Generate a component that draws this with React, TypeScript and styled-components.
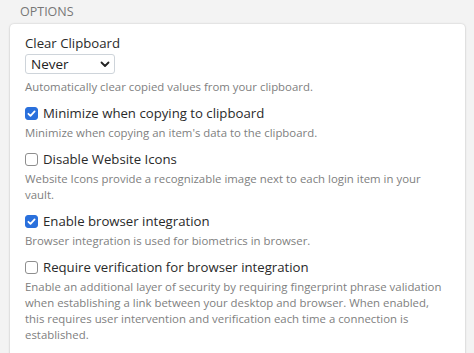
import React, { useState } from "react";
import styled, { createGlobalStyle } from "styled-components";

const GlobalStyle = createGlobalStyle`
  html, body {
    margin: 0;
    padding: 0;
    background: #f3f3f3;
    font-family: "Open Sans", "Liberation Sans", sans-serif;
    -webkit-font-smoothing: antialiased;
  }
`;

const Page = styled.div`
  padding: 0 10px 0 10px;
  width: 455px;
`;

const SectionTitle = styled.h2`
  margin: 0;
  padding: 3px 10px 0;
  height: 21px;
  font-size: 12.5px;
  font-weight: 400;
  line-height: 18px;
  color: #777;
  text-transform: uppercase;
`;

const Card = styled.div`
  background: #fff;
  border-radius: 4px;
  box-shadow: 0 0 2px rgba(0, 0, 0, 0.22), 0 1px 2px rgba(0, 0, 0, 0.08);
  padding: 9px 15px 12px;
`;

const FormGroup = styled.div`
  margin-bottom: 8px;
`;

const Label = styled.label`
  display: flex;
  align-items: center;
  font-size: 13.2px;
  line-height: 20px;
  color: #2a2a2a;
`;

const SelectWrap = styled.div`
  position: relative;
  width: 90px;
  margin-top: 1px;
`;

const Select = styled.select`
  appearance: none;
  display: block;
  width: 100%;
  height: 20px;
  padding: 0 0 0 5px;
  border: 1px solid #ced4da;
  border-radius: 3px;
  background: #fff;
  font-family: inherit;
  font-size: 13.5px;
  color: #222;
  line-height: 18px;
`;

const Chevron = styled.svg`
  position: absolute;
  right: 5px;
  top: 7px;
  pointer-events: none;
`;

const Help = styled.div<{ $gap?: number }>`
  margin-top: ${({ $gap }) => $gap ?? 2}px;
  font-size: 11.4px;
  line-height: 16px;
  color: #808080;
`;

const Box = styled.input`
  appearance: none;
  margin: 0 5px 0 0;
  width: 13px;
  height: 13px;
  flex: none;
  border: 1px solid #8e8e8e;
  border-radius: 3px;
  background: #fff;

  &:checked {
    border-color: #2a70dc;
    background: #2a70dc url("data:image/svg+xml;utf8,<svg xmlns='http://www.w3.org/2000/svg' viewBox='0 0 12 12'><path d='M2.6 6.3l2.3 2.3 4.5-5' fill='none' stroke='white' stroke-width='1.9' stroke-linecap='round' stroke-linejoin='round'/></svg>") center / 11px 11px no-repeat;
  }
`;

type Option = { id: string; label: string; help: string; checked: boolean };

const options: Option[] = [
  {
    id: "minimize",
    label: "Minimize when copying to clipboard",
    help: "Minimize when copying an item's data to the clipboard.",
    checked: true,
  },
  {
    id: "icons",
    label: "Disable Website Icons",
    help: "Website Icons provide a recognizable image next to each login item in your vault.",
    checked: false,
  },
  {
    id: "browser",
    label: "Enable browser integration",
    help: "Browser integration is used for biometrics in browser.",
    checked: true,
  },
  {
    id: "verify",
    label: "Require verification for browser integration",
    help: "Enable an additional layer of security by requiring fingerprint phrase validation when establishing a link between your desktop and browser. When enabled, this requires user intervention and verification each time a connection is established.",
    checked: false,
  },
];

const App: React.FC = () => {
  const [values, setValues] = useState<Record<string, boolean>>(
    Object.fromEntries(options.map((o) => [o.id, o.checked]))
  );

  return (
    <>
      <GlobalStyle />
      <Page>
        <SectionTitle>Options</SectionTitle>
        <Card>
          <FormGroup>
            <Label htmlFor="clearClipboard">Clear Clipboard</Label>
            <SelectWrap>
              <Select id="clearClipboard" defaultValue="never">
                <option value="never">Never</option>
                <option value="10">10 seconds</option>
                <option value="60">1 minute</option>
              </Select>
              <Chevron width="10" height="7" viewBox="0 0 10 7">
                <path
                  d="M1.5 1.5l3.5 3.5 3.5-3.5"
                  fill="none"
                  stroke="#222"
                  strokeWidth="1.8"
                  strokeLinecap="round"
                  strokeLinejoin="round"
                />
              </Chevron>
            </SelectWrap>
            <Help $gap={5}>Automatically clear copied values from your clipboard.</Help>
          </FormGroup>
          {options.map((o) => (
            <FormGroup key={o.id}>
              <Label htmlFor={o.id}>
                <Box
                  type="checkbox"
                  id={o.id}
                  checked={values[o.id]}
                  onChange={() => setValues({ ...values, [o.id]: !values[o.id] })}
                />
                {o.label}
              </Label>
              <Help>{o.help}</Help>
            </FormGroup>
          ))}
        </Card>
      </Page>
    </>
  );
};

export default App;
